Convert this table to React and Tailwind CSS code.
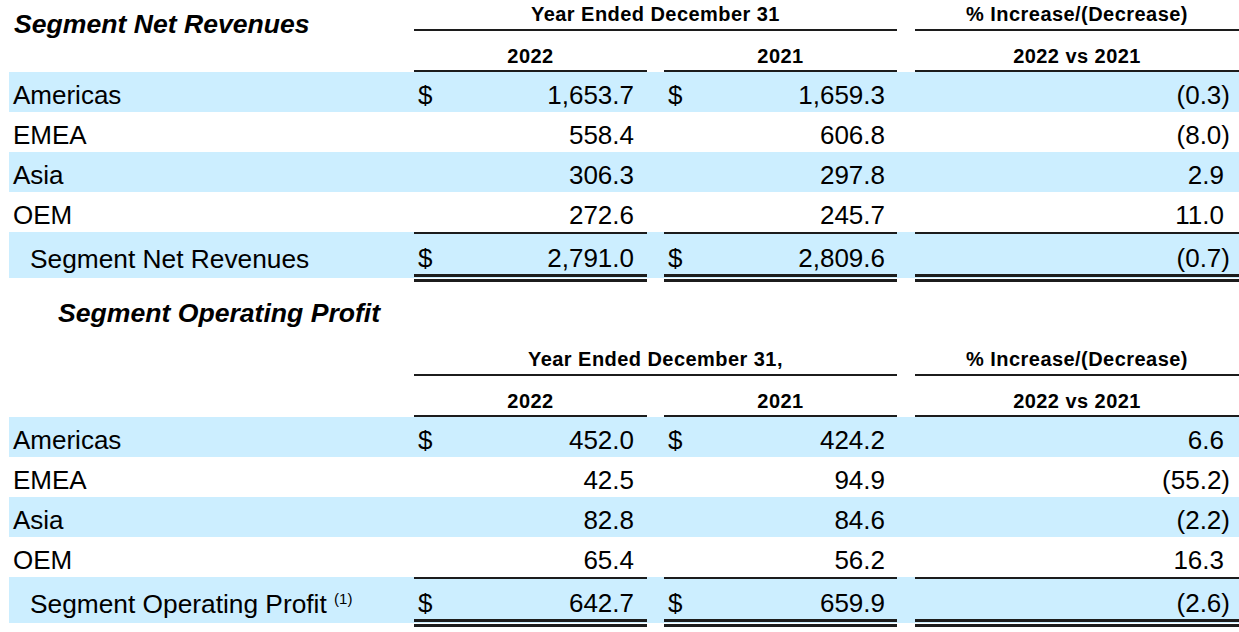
import React from "react";

const revenue = {
  title: "Segment Net Revenues",
  heading: "Year Ended December 31",
  rows: [
    { label: "Americas", a: "1,653.7", b: "1,659.3", c: "(0.3)", dollar: true },
    { label: "EMEA", a: "558.4", b: "606.8", c: "(8.0)" },
    { label: "Asia", a: "306.3", b: "297.8", c: "2.9" },
    { label: "OEM", a: "272.6", b: "245.7", c: "11.0" },
  ],
  total: { label: "Segment Net Revenues", a: "2,791.0", b: "2,809.6", c: "(0.7)" },
};

const profit = {
  heading: "Year Ended December 31,",
  rows: [
    { label: "Americas", a: "452.0", b: "424.2", c: "6.6", dollar: true },
    { label: "EMEA", a: "42.5", b: "94.9", c: "(55.2)" },
    { label: "Asia", a: "82.8", b: "84.6", c: "(2.2)" },
    { label: "OEM", a: "65.4", b: "56.2", c: "16.3" },
  ],
  total: { label: "Segment Operating Profit", note: "(1)", a: "642.7", b: "659.9", c: "(2.6)" },
};

const Money = ({ dollar, value, pr }) => (
  <div className={`flex justify-between pl-[4px] ${pr}`}>
    <span>{dollar ? "$" : ""}</span>
    <span>{value}</span>
  </div>
);

// positives sit a bit left of the closing paren, accounting style
const Pct = ({ value }) => (
  <div className={`text-right ${value.startsWith("(") ? "pr-[9px]" : "pr-[15px]"}`}>{value}</div>
);

const Header = ({ title, heading }) => (
  <div className="flex h-[72px] text-[20px] font-bold tracking-[0.45px] leading-[24px]">
    <div className="w-[405px] pl-[5px] pt-[9px] text-[26.6px] leading-[30px] italic tracking-normal">
      {title}
    </div>
    <div className="flex w-[483px] flex-col">
      <div className="h-[31px] border-b-2 border-[#1c1c1c] pt-[2px] text-center">{heading}</div>
      <div className="flex h-[41px]">
        <div className="w-[233px] border-b-2 border-[#1c1c1c] pt-[13px] text-center">2022</div>
        <div className="w-[17px]" />
        <div className="w-[233px] border-b-2 border-[#1c1c1c] pt-[13px] text-center">2021</div>
      </div>
    </div>
    <div className="w-[18px]" />
    <div className="flex w-[324px] flex-col">
      <div className="h-[31px] border-b-2 border-[#1c1c1c] pt-[2px] text-center">% Increase/(Decrease)</div>
      <div className="h-[41px] border-b-2 border-[#1c1c1c] pt-[13px] text-center">2022 vs 2021</div>
    </div>
  </div>
);

const DataRow = ({ row, blue }) => (
  <div className={`flex h-[40px] pt-[8px] leading-[30px] ${blue ? "bg-[#cceeff]" : ""}`}>
    <div className="w-[405px] pl-[4px]">{row.label}</div>
    <div className="w-[233px]">
      <Money dollar={row.dollar} value={row.a} pr="pr-[13px]" />
    </div>
    <div className="w-[17px]" />
    <div className="w-[233px]">
      <Money dollar={row.dollar} value={row.b} pr="pr-[12px]" />
    </div>
    <div className="w-[18px]" />
    <div className="w-[324px]">
      <Pct value={row.c} />
    </div>
  </div>
);

const TotalCell = ({ children, w }) => (
  <div className={`${w} flex flex-col`}>
    <div className="h-[42px] border-t-2 border-[#1c1c1c] pt-[9px]">{children}</div>
    <div className="h-[8px] border-y-[3px] border-[#1c1c1c]" />
  </div>
);

const TotalRow = ({ row }) => (
  <div className="flex h-[50px] leading-[30px] bg-[linear-gradient(to_bottom,#cceeff_46px,transparent_46px)]">
    <div className="w-[405px] pl-[21px] pt-[12px] text-[26.3px]">
      {row.label}
      {row.note && (
        <>
          {" "}
          <span className="relative -top-[9px] text-[15px]">{row.note}</span>
        </>
      )}
    </div>
    <TotalCell w="w-[233px]">
      <Money dollar value={row.a} pr="pr-[13px]" />
    </TotalCell>
    <div className="w-[17px]" />
    <TotalCell w="w-[233px]">
      <Money dollar value={row.b} pr="pr-[12px]" />
    </TotalCell>
    <div className="w-[18px]" />
    <TotalCell w="w-[324px]">
      <Pct value={row.c} />
    </TotalCell>
  </div>
);

const Block = ({ data, title }) => (
  <div>
    <Header title={title} heading={data.heading} />
    {data.rows.map((row, i) => (
      <DataRow key={row.label} row={row} blue={i % 2 === 0} />
    ))}
    <TotalRow row={data.total} />
  </div>
);

export default function App() {
  return (
    <div className="h-[632px] w-[1239px] overflow-hidden bg-white font-['Liberation_Sans',Arial,sans-serif] text-[26px] text-black">
      <div className="ml-[9px] w-[1230px]">
        <Block data={revenue} title={revenue.title} />
        {/* second table title */}
        <div className="h-[63px] pl-[49px] pt-[16px] text-[26.6px] leading-[30px] font-bold italic">
          Segment Operating Profit
        </div>
        <Block data={profit} />
      </div>
    </div>
  );
}
